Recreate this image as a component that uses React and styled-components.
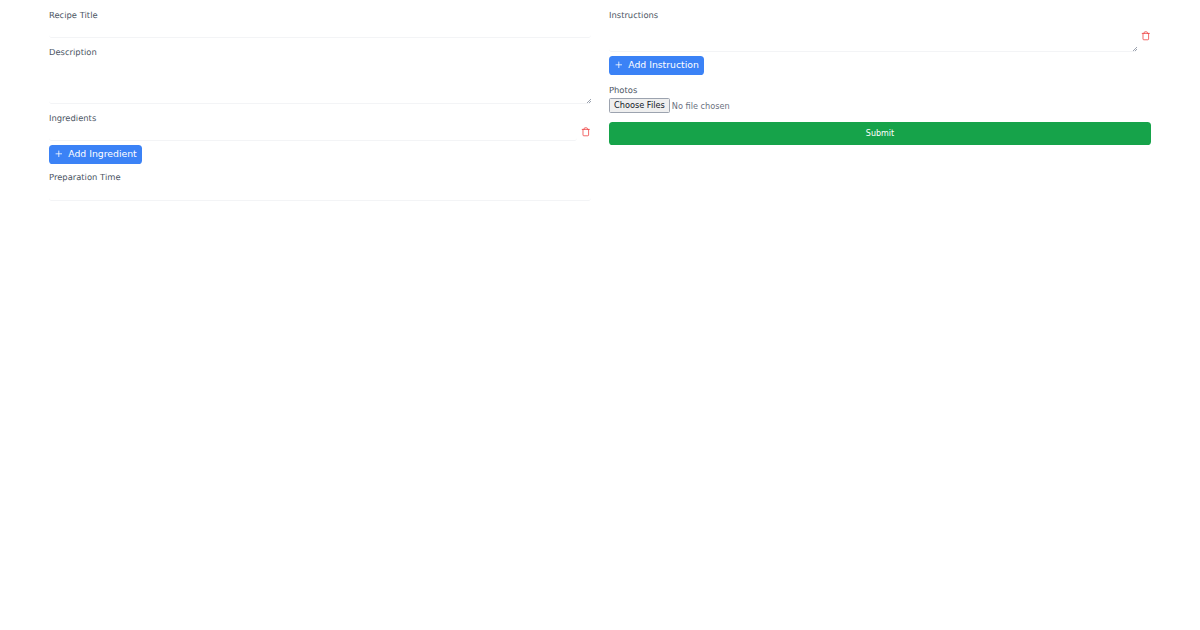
import React from "react";
import styled, { createGlobalStyle } from "styled-components";
import { Plus, Trash } from "lucide-react";

const Global = createGlobalStyle`
  html, body { margin: 0; padding: 0; background: #fff; }
  * { box-sizing: border-box; }
  body { font-family: "DejaVu Sans", sans-serif; line-height: 1.5; text-rendering: geometricPrecision; }
`;
const Form = styled.form`
  width: 1120px; margin: 0 auto; padding: 8px 9px 0;
  display: grid; grid-template-columns: 1fr 1fr; gap: 18px; align-items: start;
`;
const Column = styled.div`display: flex; flex-direction: column; gap: ${p => p.$gap}px; min-width: 0;`;
const Field = styled.div`display: flex; flex-direction: column;`;
const Label = styled.label`font-size: 8.4px; line-height: 14px; color: #4b5563; font-weight: 400;`;
const Input = styled.input`
  display: block; width: 100%; height: 16.4px; border: 0; border-bottom: 1px solid #f3f4f6;
  border-radius: 3.6px; outline: none; background: #fff; padding: 0;
`;
const Area = styled.textarea`
  display: block; width: 100%; border: 0; border-bottom: 1px solid #f3f4f6;
  border-radius: 3.6px; outline: none; background: #fff; padding: 0;
  height: ${p => p.$h}px; resize: vertical;
  &::-webkit-resizer {
    background: linear-gradient(135deg, transparent 60%, #9ca3af 60%, #9ca3af 68%, transparent 68%, transparent 80%, #9ca3af 80%, #9ca3af 88%, transparent 88%) no-repeat right bottom / 6px 6px;
  }
`;
const Row = styled.div`display: flex; align-items: center; gap: 4px;`;
const TrashButton = styled.button`
  border: 0; background: none; color: #ef4444; padding: 0; width: 10px; flex: none;
  margin-bottom: 1.5px; display: flex; align-items: center; justify-content: center;
`;
const AddButton = styled.button`
  align-self: flex-start; height: 18.7px; margin-top: 4px; padding: 0 4.8px 1px;
  display: flex; align-items: center; gap: 4.8px; border: 0; border-radius: 3.6px;
  background: #3b82f6; color: #fff; font: 9.3px "DejaVu Sans", sans-serif;
`;
const FilePicker = styled.input`
  font: 8.2px "DejaVu Sans", sans-serif; color: #6b7280; display: block;
  height: 16.5px; margin-top: 1px; padding: 0;
  &::file-selector-button {
    font: 8.2px "DejaVu Sans", sans-serif; color: #111827; height: 15px;
    padding: 0 4px; margin: 0 2px 0 0; border: 1px solid #9ca3af; border-radius: 1.5px;
    background: #efefef;
  }
`;
const Submit = styled.button`
  width: 100%; height: 22.5px; border: 0; border-radius: 3.6px; background: #16a34a; color: #fff;
  font: 8px "DejaVu Sans", sans-serif;
`;

export default function App() {
  return (
    <>
      <Global />
      <Form>
        <Column $gap={6.6}>
          <Field><Label>Recipe Title</Label><Input /></Field>
          <Field><Label>Description</Label><Area $h={45} /></Field>
          <Field>
            <Label>Ingredients</Label>
            <Row><Input /><TrashButton type="button"><Trash size={9.6} /></TrashButton></Row>
            <AddButton type="button"><Plus size={9.6} />Add Ingredient</AddButton>
          </Field>
          <Field><Label>Preparation Time</Label><Input /></Field>
        </Column>
        <Column $gap={8}>
          <Field>
            <Label>Instructions</Label>
            <Row><Area $h={30} /><TrashButton type="button"><Trash size={9.6} /></TrashButton></Row>
            <AddButton type="button"><Plus size={9.6} />Add Instruction</AddButton>
          </Field>
          <Field><Label>Photos</Label><FilePicker type="file" multiple /></Field>
          <Submit type="button">Submit</Submit>
        </Column>
      </Form>
    </>
  );
}
